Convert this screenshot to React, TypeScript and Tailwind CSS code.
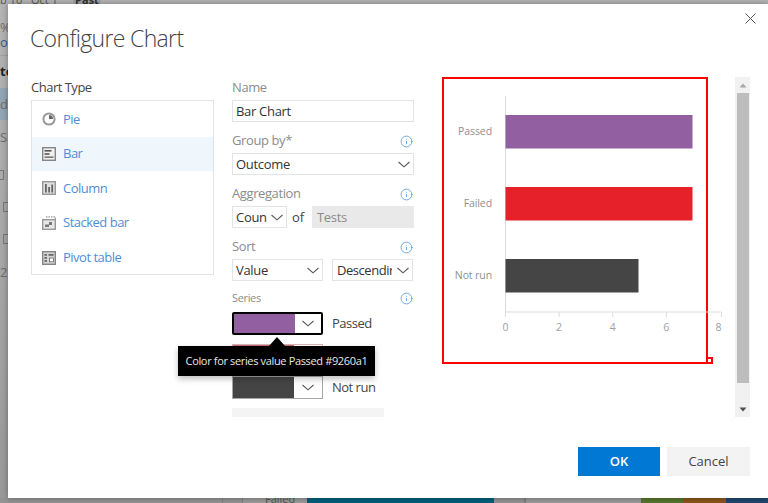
import React from "react";
import { Info } from "lucide-react";

const FONT = "font-['Open_Sans','Noto_Sans',sans-serif]";

function Chevron({ className = "" }: { className?: string }) {
  return (
    <svg width="12" height="7" viewBox="0 0 12 7" className={className} fill="none" stroke="#555" strokeWidth="1.05">
      <polyline points="0.5,1 6,5.8 11.5,1" />
    </svg>
  );
}

function InfoDot() {
  return <Info size={13} strokeWidth={1.4} className="text-[#3f94e0]" />;
}

function FieldLabel({ text, info }: { text: string; info?: boolean }) {
  return (
    <div className="flex h-[18px] items-center justify-between pr-[1px] text-[13px] tracking-[-0.4px] text-[#8c8c8c]">
      <span>{text}</span>
      {info ? <InfoDot /> : null}
    </div>
  );
}

function Select({ text, className = "", textClass = "" }: { text: string; className?: string; textClass?: string }) {
  return (
    <div className={`flex h-[22px] items-center justify-between overflow-hidden border border-[#e3e3e3] pl-[3px] pr-[3px] text-[13px] tracking-[-0.3px] text-[#333] ${className}`}>
      <span className={`mt-[2px] overflow-hidden whitespace-nowrap ${textClass}`}>{text}</span>
      <Chevron className="shrink-0" />
    </div>
  );
}

function PieIcon() {
  return (
    <svg width="14" height="14" viewBox="0 0 14 14">
      <circle cx="7" cy="7" r="5.6" fill="#fff" stroke="#999" strokeWidth="2" />
      <path d="M7 7 V3 A4 4 0 0 1 11 7 Z" fill="#666" />
    </svg>
  );
}
function BarIcon() {
  return (
    <svg width="14" height="14" viewBox="0 0 14 14">
      <rect x="0.7" y="0.7" width="12.6" height="12.6" fill="#f1f1f1" stroke="#858585" strokeWidth="1.4" />
      <rect x="2.5" y="3" width="7" height="1.6" fill="#555" />
      <rect x="2.5" y="6.2" width="5" height="1.6" fill="#555" />
      <rect x="2.5" y="9.4" width="9" height="1.6" fill="#777" />
    </svg>
  );
}
function ColumnIcon() {
  return (
    <svg width="14" height="14" viewBox="0 0 14 14">
      <rect x="0.7" y="0.7" width="12.6" height="12.6" fill="#dedede" stroke="#999" strokeWidth="1.4" />
      <rect x="3" y="3" width="1.8" height="8.5" fill="#666" />
      <rect x="6.2" y="6" width="1.8" height="5.5" fill="#666" />
      <rect x="9.3" y="3.5" width="1.8" height="8" fill="#666" />
    </svg>
  );
}
function StackedIcon() {
  return (
    <svg width="14" height="14" viewBox="0 0 14 14">
      <rect x="0.7" y="3.7" width="12.6" height="9.6" fill="#e8e8e8" stroke="#999" strokeWidth="1.4" />
      <path d="M4 0.8 H13.4 V3" fill="none" stroke="#999" strokeWidth="1.2" strokeDasharray="1.5 1" />
      <rect x="3" y="8.5" width="4" height="2.5" fill="#777" />
      <rect x="7" y="6" width="3" height="3" fill="#777" />
    </svg>
  );
}
function PivotIcon() {
  return (
    <svg width="14" height="14" viewBox="0 0 14 14">
      <rect x="0.7" y="0.7" width="12.6" height="12.6" fill="#d5d5d5" stroke="#858585" strokeWidth="1.4" />
      <rect x="2.5" y="3" width="2.5" height="1.8" fill="#666" />
      <rect x="2.5" y="6" width="2.5" height="1.8" fill="#666" />
      <rect x="2.5" y="9" width="2.5" height="1.8" fill="#666" />
      <rect x="6.5" y="3" width="5" height="1.8" fill="#666" />
      <rect x="7.5" y="7" width="4" height="3.8" fill="#fff" stroke="#666" strokeWidth="0.8" />
    </svg>
  );
}

const CHART_TYPES: { name: string; icon: React.ReactNode; active?: boolean }[] = [
  { name: "Pie", icon: <PieIcon /> },
  { name: "Bar", icon: <BarIcon />, active: true },
  { name: "Column", icon: <ColumnIcon /> },
  { name: "Stacked bar", icon: <StackedIcon /> },
  { name: "Pivot table", icon: <PivotIcon /> },
];

function Swatch({ color, label, boxClass }: { color: string; label: string; boxClass: string }) {
  return (
    <div className="flex items-center gap-[9px]">
      <div className={`flex h-[23px] w-[91px] overflow-hidden ${boxClass}`}>
        <div className="h-full w-[61px]" style={{ backgroundColor: color }} />
        <div className="flex flex-1 items-center justify-center bg-white">
          <Chevron />
        </div>
      </div>
      <span className="mt-[1px] text-[13px] tracking-[-0.5px] text-[#444]">{label}</span>
    </div>
  );
}

function Chart() {
  const ox = 61.5;
  const bars = [
    { y: 36, w: 187, c: "#9260a1", l: "Passed" },
    { y: 108, w: 187, c: "#e6212a", l: "Failed" },
    { y: 180, w: 133, c: "#454545", l: "Not run" },
  ];
  const ticks = [0, 2, 4, 6, 8];
  return (
    <svg width="290" height="270" viewBox="0 0 290 270" className="block overflow-visible" fontFamily="'Open Sans', sans-serif">
      <line x1={ox} y1="17" x2={ox} y2="233" stroke="#dcdcdc" />
      <line x1={ox} y1="233" x2="277" y2="233" stroke="#dcdcdc" />
      {ticks.map((t) => {
        const x = ox + t * 26.8 + (t === 8 ? 1.5 : 0);
        return (
          <g key={t}>
            <line x1={x} y1="233" x2={x} y2="238" stroke="#dcdcdc" />
            <text x={t === 8 ? x - 3 : x} y="252" textAnchor="middle" fontSize="10.5" fill="#a0a0a0">
              {t}
            </text>
          </g>
        );
      })}
      {bars.map((b) => (
        <g key={b.l}>
          <rect x={ox} y={b.y} width={b.w} height={33.5} fill={b.c} />
          <text x="48" y={b.y + 19.5} textAnchor="end" fontSize="10.5" letterSpacing="-0.1" fill="#8f8f8f">
            {b.l}
          </text>
        </g>
      ))}
    </svg>
  );
}

function ScrollArrow({ up }: { up?: boolean }) {
  return (
    <div className="flex h-[16px] items-center justify-center">
      <svg width="8" height="5" viewBox="0 0 8 5">
        <polygon points={up ? "4,0.5 7.5,4.5 0.5,4.5" : "0.5,0.5 7.5,0.5 4,4.5"} fill={up ? "#a8a8a8" : "#505050"} />
      </svg>
    </div>
  );
}

function LeftStrip() {
  return (
    <div className="flex w-[8px] shrink-0 flex-col overflow-hidden whitespace-nowrap bg-gradient-to-b from-[#b4b4b4] to-[#999999] text-[13px] leading-[16px] text-[#6b6b6b]">
      <div className="mt-[15px] h-[16px]">%</div>
      <div className="mt-[-1px] h-[16px] text-[#2a5f8f]">oc</div>
      <div className="mt-[5px] h-px bg-[#a0a0a0]" />
      <div className="mt-[7px] h-[16px] font-bold text-[#222]">te</div>
      <div className="mt-[9px] h-[32px] bg-[#93a4b4] pt-[8px]">d</div>
      <div className="mt-[9px] h-[16px]">Sh</div>
      <div className="mt-[25px] h-[10px] w-[4px] border border-l-0 border-[#777]" />
      <div className="mt-[22px] h-[10px] w-[8px] border border-r-0 border-[#777] ml-[3px]" />
      <div className="mt-[22px] h-[10px] w-[8px] border border-r-0 border-[#777] ml-[3px]" />
      <div className="mt-[20px] h-[16px]">20</div>
    </div>
  );
}

function TopStrip() {
  return (
    <div className="flex h-[4px] shrink-0 overflow-hidden whitespace-nowrap bg-[#b5b5b5] text-[11px] leading-[8px] text-[#555]">
      <div className="mt-[-4px] flex items-start">
        <span className="w-[31px]">p 10</span>
        <span className="w-[42px]">Oct 1</span>
        <span className="h-[8px] w-[28px] rounded-[4px] bg-[#a2a2a2] text-center font-bold text-[#333]">Past</span>
      </div>
    </div>
  );
}

function BottomStrip() {
  return (
    <div className="flex h-[5px] shrink-0 overflow-hidden bg-[#939393]">
      <div className="w-[222px]" />
      <div className="w-[20px] border-l border-[#808080]" />
      <div className="w-[65px] border-l border-[#808080] bg-[#999] pl-[22px] text-[11px] leading-[2px] text-[#555]">Failed</div>
      <div className="w-[187px] bg-[#005f7c]" />
      <div className="w-[31px] border-r border-[#808080]" />
      <div className="w-[116px] border-l border-[#808080] bg-[#999]" />
      <div className="w-[42px] bg-[#55752f]" />
      <div className="w-[43px] bg-[#8a5518]" />
      <div className="flex-1 bg-[#1f4670]" />
    </div>
  );
}

export default function App() {
  return (
    <div className={`flex h-[503px] w-[768px] flex-col overflow-hidden ${FONT}`}>
      <TopStrip />
      <div className="flex min-h-0 flex-1">
        <LeftStrip />
        <div className="relative flex min-w-0 flex-1 flex-col bg-white shadow-[0_0_6px_rgba(0,0,0,0.35)]">
          <svg width="11" height="11" viewBox="0 0 11 11" className="absolute right-[12px] top-[9px]" stroke="#555" strokeWidth="1">
            <line x1="0.5" y1="0.5" x2="10.5" y2="10.5" />
            <line x1="10.5" y1="0.5" x2="0.5" y2="10.5" />
          </svg>

          <div className="h-[75px] shrink-0 pl-[22px] pt-[18px] text-[23px] font-light leading-[33px] tracking-[-0.65px] text-[#444]">
            Configure Chart
          </div>

          <div className="flex min-h-0 flex-1 pl-[23px]">
            <div className="w-[183px] shrink-0">
              <div className="h-[21px] text-[13px] leading-[16px] tracking-[-0.5px] text-[#444]">Chart Type</div>
              <div className="flex h-[175px] flex-col border border-[#e3e3e3] pt-px">
                {CHART_TYPES.map((t) => (
                  <div
                    key={t.name}
                    className={`flex h-[34.6px] shrink-0 items-center gap-[7px] pl-[10px] text-[13px] tracking-[-0.5px] text-[#4f8ed6] ${
                      t.active ? "bg-[#eff6fc]" : ""
                    }`}
                  >
                    {t.icon}
                    <span>{t.name}</span>
                  </div>
                ))}
              </div>
            </div>

            <div className="ml-[18px] flex w-[182px] shrink-0 flex-col">
              <FieldLabel text="Name" />
              <div className="mt-[3px] flex h-[22px] items-center border border-[#e3e3e3] pl-[3px] text-[13px] tracking-[-0.3px] text-[#333]">
                <span className="mt-[2px]">Bar Chart</span>
              </div>
              <div className="mt-[10px]">
                <FieldLabel text="Group by*" info />
              </div>
              <Select text="Outcome" className="mt-[3px]" />
              <div className="mt-[10px]">
                <FieldLabel text="Aggregation" info />
              </div>
              <div className="mt-[3px] flex items-center">
                <Select text="Coun" className="w-[55px]" />
                <span className="ml-[5px] mt-[2px] w-[20px] text-[13px] text-[#444]">of</span>
                <div className="flex h-[22px] flex-1 items-center bg-[#e9e9e9] pl-[5px] text-[13px] tracking-[-0.3px] text-[#8a8a8a]">
                  <span className="mt-[2px]">Tests</span>
                </div>
              </div>
              <div className="mt-[10px]">
                <FieldLabel text="Sort" info />
              </div>
              <div className="mt-[3px] flex gap-[9px]">
                <Select text="Value" className="w-[91px]" />
                <Select text="Descending" className="w-[81px] gap-[5px] pl-[4px]" textClass="min-w-0 flex-1 tracking-[-0.45px]" />
              </div>
              <div className="mt-[8px] flex h-[18px] items-center justify-between pr-[1px] text-[11px] tracking-[-0.35px] text-[#8c8c8c]">
                <span>Series</span>
                <InfoDot />
              </div>
              <div className="mt-[5px] flex flex-col gap-[9px]">
                <Swatch color="#9260a1" label="Passed" boxClass="rounded-[2px] border-2 border-black" />
                <Swatch color="#c9686d" label="Failed" boxClass="border border-[#d9b4b4]" />
                <Swatch color="#454545" label="Not run" boxClass="border border-[#a8a8a8]" />
              </div>
              <div className="mt-[9px] h-[9px] w-[152px] bg-[#f4f4f4]" />
            </div>

            <div className="relative ml-[28px] mt-[-2px] h-[287px] w-[266px] shrink-0 border-2 border-[#ff0000]">
              <Chart />
              <div className="absolute bottom-[-2px] right-[-7px] h-[7px] w-[7px] border-2 border-[#ff0000] bg-white" />
            </div>

            <div className="ml-[27px] mt-[-2px] flex h-[340px] w-[15px] shrink-0 flex-col bg-[#f1f1f1]">
              <ScrollArrow up />
              <div className="mx-auto h-[290px] w-[12px] bg-[#bdbdbd]" />
              <div className="flex-1" />
              <ScrollArrow />
            </div>
          </div>

          <div className="flex shrink-0 justify-end gap-[7px] pb-[22px] pr-[18px]">
            <div className="flex h-[29px] w-[82px] items-center justify-center bg-[#0078d4] text-[13px] font-semibold text-white">OK</div>
            <div className="flex h-[29px] w-[83px] items-center justify-center bg-[#f3f3f3] text-[13px] text-[#444]">Cancel</div>
          </div>

          <div className="absolute left-[170px] top-[342px] flex h-[30px] w-[197px] items-center justify-center bg-black text-[11px] tracking-[-0.35px] text-[#e8e8e8] shadow-[0_3px_6px_rgba(0,0,0,0.25)]">
            Color for series value Passed #9260a1
            <div className="absolute left-[91px] top-[-9px] h-0 w-0 border-x-[8px] border-b-[9px] border-x-transparent border-b-black" />
          </div>
        </div>
      </div>
      <BottomStrip />
    </div>
  );
}
